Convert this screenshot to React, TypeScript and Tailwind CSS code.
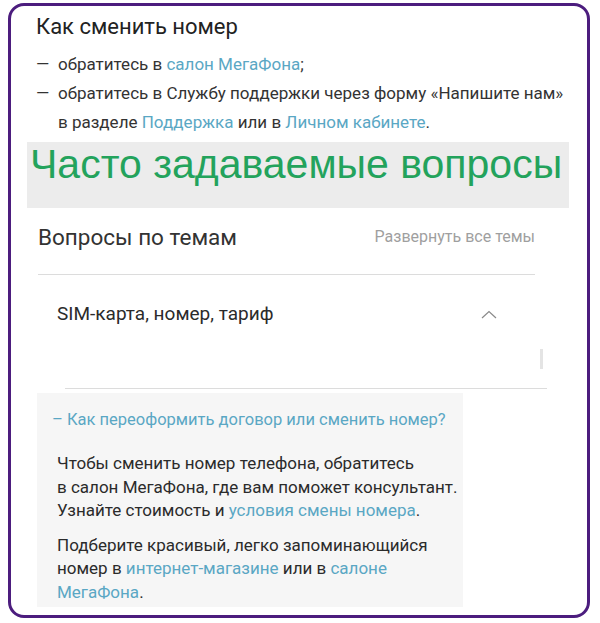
import React from "react";

const link = "text-[#5aa7c4]";

export default function App() {
  return (
    <div className="h-[623px] w-[600px] bg-white pl-[8px] pt-[3px] font-['Roboto','Liberation_Sans',sans-serif] text-[#333]">
      <div className="h-[615px] w-[582px] overflow-hidden rounded-[16px] border-[3px] border-[#4c1d7e] bg-white">
        {/* how to change number */}
        <div className="pl-[25px] pt-[7px]">
          <h1 className="text-[22px] leading-[28px] text-[#222]">Как сменить номер</h1>
          <ul className="mt-[9px] text-[17px] leading-[29px]">
            <li className="flex">
              <span className="w-[22px]">—</span>
              <span>
                обратитесь в <span className={link}>салон МегаФона</span>;
              </span>
            </li>
            <li className="flex">
              <span className="w-[22px] shrink-0">—</span>
              <span className="whitespace-nowrap">
                обратитесь в Службу поддержки через форму «Напишите нам»
                <br />в разделе <span className={link}>Поддержка</span> или в{" "}
                <span className={link}>Личном кабинете</span>.
              </span>
            </li>
          </ul>
        </div>

        <div className="ml-[16px] mt-[5px] h-[66px] w-[542px] bg-[#ececec] pl-[3px]">
          <p className="whitespace-nowrap font-['Liberation_Sans',Arial,sans-serif] text-[41px] leading-[44px] text-[#23a35c]">
            Часто задаваемые вопросы
          </p>
        </div>

        {/* topics */}
        <div className="ml-[27px] w-[497px]">
          <div className="flex items-center justify-between pb-[22px] pt-[14px]">
            <span className="text-[22.5px] leading-[30px] text-[#333]">Вопросы по темам</span>
            <span className="text-[16px] text-[#9f9f9f]">Развернуть все темы</span>
          </div>
          <div className="h-px bg-[#dcdcdc]" />
          <div className="flex items-center justify-between pl-[19px] pr-[38px] pt-[25px]">
            <span className="text-[19px] leading-[28px] text-[#2b2b2b]">SIM-карта, номер, тариф</span>
            <svg width="16" height="9" viewBox="0 0 16 9" fill="none">
              <path d="M1 8L8 1.5L15 8" stroke="#8a8a8a" strokeWidth="1.2" />
            </svg>
          </div>
        </div>
        <div className="ml-[529px] mt-[21px] h-[20px] w-[3px] bg-[#e4e4e4]" />
        <div className="ml-[54px] mt-[19px] h-px w-[482px] bg-[#dcdcdc]" />

        {/* answer */}
        <div className="ml-[26px] mt-[4px] h-[214px] w-[426px] bg-[#f6f6f6] pl-[15px] pt-[16px]">
          <p className={`whitespace-nowrap text-[16.5px] leading-[22px] ${link}`}>
            – Как переоформить договор или сменить номер?
          </p>
          <p className="mt-[21px] whitespace-nowrap pl-[5px] text-[17px] leading-[23.5px] text-[#2b2b2b]">
            Чтобы сменить номер телефона, обратитесь
            <br />в салон МегаФона, где вам поможет консультант.
            <br />
            Узнайте стоимость и <span className={link}>условия смены номера</span>.
          </p>
          <p className="mt-[11px] whitespace-nowrap pl-[5px] text-[17px] leading-[23.5px] text-[#2b2b2b]">
            Подберите красивый, легко запоминающийся
            <br />
            номер в <span className={link}>интернет-магазине</span> или в <span className={link}>салоне</span>
            <br />
            <span className={link}>МегаФона</span>.
          </p>
        </div>
      </div>
    </div>
  );
}
